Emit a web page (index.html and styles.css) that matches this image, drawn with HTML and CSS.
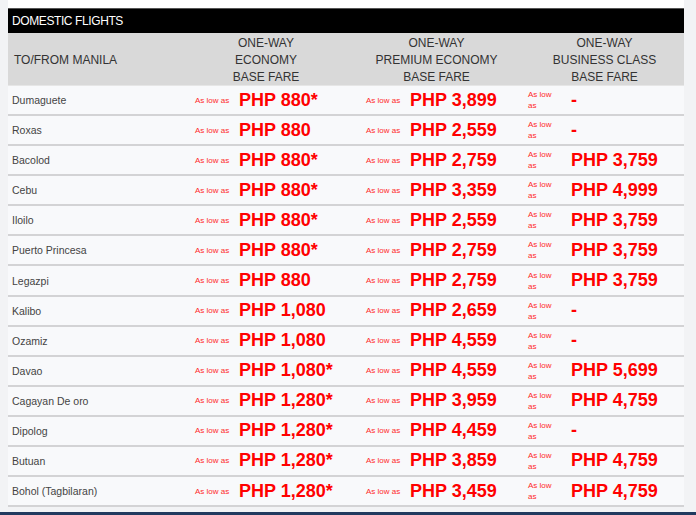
FILE: index.html
```html
<!DOCTYPE html>
<html>
<head>
<meta charset="utf-8">
<link rel="stylesheet" href="styles.css">
</head>
<body>
<div class="page">
  <div class="fares">
    <div class="title">DOMESTIC FLIGHTS</div>
    <div class="head">
      <div class="hcell hfirst">TO/FROM MANILA</div>
      <div class="hcell">ONE-WAY<br>ECONOMY<br>BASE FARE</div>
      <div class="hcell">ONE-WAY<br>PREMIUM ECONOMY<br>BASE FARE</div>
      <div class="hcell">ONE-WAY<br>BUSINESS CLASS<br>BASE FARE</div>
    </div>
    <div class="row"><div class="dest">Dumaguete</div><div class="lbl">As low as</div><div class="price">PHP 880*</div><div class="lbl">As low as</div><div class="price">PHP 3,899</div><div class="lbl lbl-narrow">As low as</div><div class="price">-</div></div>
    <div class="row"><div class="dest">Roxas</div><div class="lbl">As low as</div><div class="price">PHP 880</div><div class="lbl">As low as</div><div class="price">PHP 2,559</div><div class="lbl lbl-narrow">As low as</div><div class="price">-</div></div>
    <div class="row"><div class="dest">Bacolod</div><div class="lbl">As low as</div><div class="price">PHP 880*</div><div class="lbl">As low as</div><div class="price">PHP 2,759</div><div class="lbl lbl-narrow">As low as</div><div class="price">PHP 3,759</div></div>
    <div class="row"><div class="dest">Cebu</div><div class="lbl">As low as</div><div class="price">PHP 880*</div><div class="lbl">As low as</div><div class="price">PHP 3,359</div><div class="lbl lbl-narrow">As low as</div><div class="price">PHP 4,999</div></div>
    <div class="row"><div class="dest">Iloilo</div><div class="lbl">As low as</div><div class="price">PHP 880*</div><div class="lbl">As low as</div><div class="price">PHP 2,559</div><div class="lbl lbl-narrow">As low as</div><div class="price">PHP 3,759</div></div>
    <div class="row"><div class="dest">Puerto Princesa</div><div class="lbl">As low as</div><div class="price">PHP 880*</div><div class="lbl">As low as</div><div class="price">PHP 2,759</div><div class="lbl lbl-narrow">As low as</div><div class="price">PHP 3,759</div></div>
    <div class="row"><div class="dest">Legazpi</div><div class="lbl">As low as</div><div class="price">PHP 880</div><div class="lbl">As low as</div><div class="price">PHP 2,759</div><div class="lbl lbl-narrow">As low as</div><div class="price">PHP 3,759</div></div>
    <div class="row"><div class="dest">Kalibo</div><div class="lbl">As low as</div><div class="price">PHP 1,080</div><div class="lbl">As low as</div><div class="price">PHP 2,659</div><div class="lbl lbl-narrow">As low as</div><div class="price">-</div></div>
    <div class="row"><div class="dest">Ozamiz</div><div class="lbl">As low as</div><div class="price">PHP 1,080</div><div class="lbl">As low as</div><div class="price">PHP 4,559</div><div class="lbl lbl-narrow">As low as</div><div class="price">-</div></div>
    <div class="row"><div class="dest">Davao</div><div class="lbl">As low as</div><div class="price">PHP 1,080*</div><div class="lbl">As low as</div><div class="price">PHP 4,559</div><div class="lbl lbl-narrow">As low as</div><div class="price">PHP 5,699</div></div>
    <div class="row"><div class="dest">Cagayan De oro</div><div class="lbl">As low as</div><div class="price">PHP 1,280*</div><div class="lbl">As low as</div><div class="price">PHP 3,959</div><div class="lbl lbl-narrow">As low as</div><div class="price">PHP 4,759</div></div>
    <div class="row"><div class="dest">Dipolog</div><div class="lbl">As low as</div><div class="price">PHP 1,280*</div><div class="lbl">As low as</div><div class="price">PHP 4,459</div><div class="lbl lbl-narrow">As low as</div><div class="price">-</div></div>
    <div class="row"><div class="dest">Butuan</div><div class="lbl">As low as</div><div class="price">PHP 1,280*</div><div class="lbl">As low as</div><div class="price">PHP 3,859</div><div class="lbl lbl-narrow">As low as</div><div class="price">PHP 4,759</div></div>
    <div class="row"><div class="dest">Bohol (Tagbilaran)</div><div class="lbl">As low as</div><div class="price">PHP 1,280*</div><div class="lbl">As low as</div><div class="price">PHP 3,459</div><div class="lbl lbl-narrow">As low as</div><div class="price">PHP 4,759</div></div>
  </div>
</div>
<div class="bottom-bar"></div>
</body>
</html>
```

FILE: styles.css
```css
html, body {
  margin: 0;
  padding: 0;
}
body {
  background: #f2f3f5;
  font-family: "Liberation Sans", Arial, sans-serif;
}
.page {
  width: 676px;
  margin-left: 8px;
  padding-top: 8px;
  background: #ffffff;
}
.fares {
  background: #f8f9fb;
}
.title {
  height: 25px;
  background: #000;
  color: #fff;
  font-size: 12px;
  letter-spacing: -0.4px;
  line-height: 25px;
  padding-left: 4px;
  box-sizing: border-box;
  border-top: 1px solid #555;
}
.head {
  display: grid;
  grid-template-columns: 176px 164px 177px 159px;
  height: 53px;
  padding-top: 2px;
  background: #d9d9d9;
  color: #333;
  font-size: 12px;
  line-height: 17px;
  border-bottom: 1px solid #e6e6e6;
  box-sizing: border-box;
}
.hcell {
  display: flex;
  align-items: center;
  justify-content: center;
  text-align: center;
}
.hcell.hfirst {
  justify-content: flex-start;
  padding-left: 6px;
}
.row {
  display: grid;
  grid-template-columns: 183px 44px 127px 44px 118px 43px 117px;
  height: 30.08px;
  border-bottom: 2px solid #d3d3d5;
  box-sizing: border-box;
  align-items: center;
}
.dest {
  padding-left: 4px;
  font-size: 10.5px;
  color: #444;
}
.lbl {
  padding-left: 4px;
  font-size: 8px;
  line-height: 11px;
  color: #ff2a2a;
  white-space: normal;
}
.lbl-narrow {
  padding-right: 9px;
}
.price {
  padding-left: 4px;
  font-size: 18px;
  font-weight: bold;
  color: #ff0000;
  white-space: nowrap;
}
.bottom-bar {
  position: fixed;
  left: 0;
  right: 0;
  bottom: 0;
  height: 3px;
  background: #213a5f;
}
```
